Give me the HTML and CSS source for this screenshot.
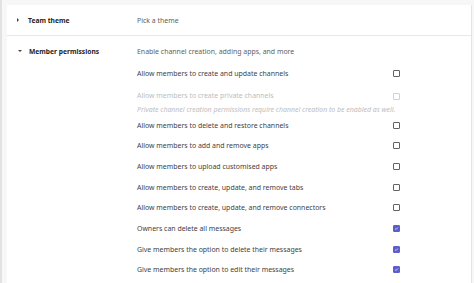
FILE: index.html
```html
<!DOCTYPE html>
<html>
<head>
<meta charset="utf-8">
<link rel="stylesheet" href="styles.css">
</head>
<body>
<div class="frame">
  <div class="card">
    <section class="section section-collapsed">
      <div class="head">
        <span class="caret caret-right"></span>
        <span class="title">Team theme</span>
      </div>
      <div class="desc">Pick a theme</div>
    </section>
    <section class="section">
      <div class="head">
        <span class="caret caret-down"></span>
        <span class="title">Member permissions</span>
      </div>
      <div class="body">
        <div class="desc">Enable channel creation, adding apps, and more</div>
        <ul class="options">
          <li class="opt"><span class="label">Allow members to create and update channels</span><span class="box"></span></li>
          <li class="opt opt-disabled"><span class="label">Allow members to create private channels</span><span class="box"></span></li>
          <li class="note">Private channel creation permissions require channel creation to be enabled as well.</li>
          <li class="opt"><span class="label">Allow members to delete and restore channels</span><span class="box"></span></li>
          <li class="opt"><span class="label">Allow members to add and remove apps</span><span class="box"></span></li>
          <li class="opt"><span class="label">Allow members to upload customised apps</span><span class="box"></span></li>
          <li class="opt"><span class="label">Allow members to create, update, and remove tabs</span><span class="box"></span></li>
          <li class="opt"><span class="label">Allow members to create, update, and remove connectors</span><span class="box"></span></li>
          <li class="opt"><span class="label">Owners can delete all messages</span><span class="box box-on"><svg viewBox="0 0 8 8" width="7" height="7"><path d="M1.8 4.2 L3.3 5.6 L6.2 2.5" fill="none" stroke="#fff" stroke-width="1.1"/></svg></span></li>
          <li class="opt"><span class="label">Give members the option to delete their messages</span><span class="box box-on"><svg viewBox="0 0 8 8" width="7" height="7"><path d="M1.8 4.2 L3.3 5.6 L6.2 2.5" fill="none" stroke="#fff" stroke-width="1.1"/></svg></span></li>
          <li class="opt"><span class="label">Give members the option to edit their messages</span><span class="box box-on"><svg viewBox="0 0 8 8" width="7" height="7"><path d="M1.8 4.2 L3.3 5.6 L6.2 2.5" fill="none" stroke="#fff" stroke-width="1.1"/></svg></span></li>
        </ul>
      </div>
    </section>
  </div>
</div>
</body>
</html>
```
FILE: styles.css
```css
html, body {
  margin: 0;
  padding: 0;
  height: 100%;
  overflow: hidden;
}
body {
  background: #f2f2f2;
  font-family: "Noto Sans", "Open Sans", sans-serif;
  font-size: 6.95px;
  color: #424242;
}
.frame {
  height: 100%;
  box-sizing: border-box;
  border-left: 2px solid #e2e2e2;
  padding: 5px 2px 0 5px;
  background: #f7f7f7;
}
.card {
  background: #fff;
  height: 100%;
  border-right: 1px solid #e4e4e4;
}
.section {
  display: flex;
}
.section-collapsed {
  height: 30px;
  align-items: center;
  border-bottom: 1px solid #e8e8e8;
}
.head {
  width: 130px;
  flex: none;
  display: flex;
  align-items: center;
  padding-left: 10px;
  box-sizing: border-box;
}
.section:not(.section-collapsed) .head {
  align-self: flex-start;
  height: 30px;
}
.caret {
  width: 0;
  height: 0;
  display: inline-block;
  flex: none;
}
.caret-right {
  border-top: 2px solid transparent;
  border-bottom: 2px solid transparent;
  border-left: 2px solid #444;
  margin-left: 0;
  margin-right: 9px;
}
.caret-down {
  border-left: 2px solid transparent;
  border-right: 2px solid transparent;
  border-top: 2px solid #444;
  margin-left: 1px;
  margin-right: 7px;
}
.title {
  font-weight: 700;
  color: #242424;
  font-size: 6.7px;
}
.desc {
  color: #616161;
}
.body {
  flex: 1;
  display: flex;
  flex-direction: column;
}
.body > .desc {
  height: 30px;
  display: flex;
  align-items: center;
}
.options {
  list-style: none;
  margin: 0;
  padding: 0;
  width: 264px;
}
.opt {
  height: 20.7px;
  display: flex;
  align-items: center;
  justify-content: space-between;
}
.opt:first-child {
  margin-top: -3px;
}
.box {
  width: 7px;
  height: 7px;
  border: 1px solid #616161;
  border-radius: 1px;
  box-sizing: border-box;
  display: flex;
  align-items: center;
  justify-content: center;
  margin-right: 1px;
}
.box-on {
  background: #5b5fc7;
  border-color: #5b5fc7;
}
.box svg {
  display: block;
}
.opt-disabled {
  color: #bdbdbd;
  height: 14px;
  align-items: flex-end;
  margin-top: 2px;
}
.opt-disabled .box {
  border-color: #d1d1d1;
}
.note {
  color: #bdbdbd;
  font-style: italic;
  height: 15px;
  padding-top: 4px;
  box-sizing: border-box;
  display: flex;
  align-items: center;
  white-space: nowrap;
}
```
